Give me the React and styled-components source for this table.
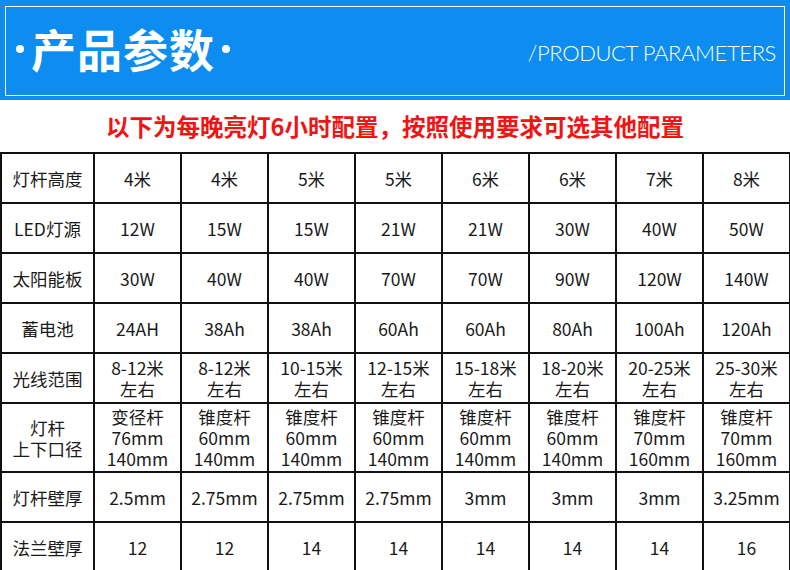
import React from "react";
import styled, { createGlobalStyle } from "styled-components";

const Global = createGlobalStyle`
  body {
    margin: 0;
    background: #fff;
    font-family: "Noto Sans CJK SC", "Noto Sans", sans-serif;
  }
`;

const Root = styled.div`
  width: 790px;
  height: 570px;
  overflow: hidden;
`;

const Banner = styled.div`
  background: #0d8def;
  height: 100px;
  padding: 6px 5px 4px 5px;
  box-sizing: border-box;
`;

const BannerFrame = styled.div`
  height: 100%;
  box-sizing: border-box;
  border: 1px solid #fff;
  display: flex;
  align-items: center;
  justify-content: space-between;
  padding: 0 8px 0 10px;
`;

const Title = styled.h1`
  margin: 0 0 6px 0;
  color: #fff;
  font-size: 45px;
  font-weight: 700;
  letter-spacing: 1px;
  display: flex;
  align-items: center;
  gap: 7px;
`;

const Dot = styled.span`
  display: inline-block;
  width: 8px;
  height: 8px;
  border-radius: 50%;
  background: #fff;
  margin-top: 2px;
`;

const Subtitle = styled.div`
  color: #fff;
  font-family: "Lato", "Liberation Sans", sans-serif;
  font-weight: 300;
  font-size: 22px;
  letter-spacing: -0.4px;
  margin-top: 2px;
`;

const Notice = styled.p`
  margin: 0;
  height: 52px;
  display: flex;
  align-items: center;
  justify-content: center;
  color: #f01414;
  font-size: 23.5px;
  font-weight: 700;
  box-sizing: border-box;
`;

const Table = styled.table`
  width: 790px;
  border-collapse: collapse;
  table-layout: fixed;
  color: #1a1a1a;
  font-size: 17.5px;
`;

const Cell = styled.td`
  border: 2px solid #111;
  height: ${(p) => p.$h}px;
  padding: 0;
  text-align: center;
  vertical-align: middle;
  line-height: 21px;
  white-space: pre-line;
`;

const rows = [
  { h: 48, label: "灯杆高度", values: ["4米", "4米", "5米", "5米", "6米", "6米", "7米", "8米"] },
  { h: 48, label: "LED灯源", values: ["12W", "15W", "15W", "21W", "21W", "30W", "40W", "50W"] },
  { h: 48, label: "太阳能板", values: ["30W", "40W", "40W", "70W", "70W", "90W", "120W", "140W"] },
  { h: 48, label: "蓄电池", values: ["24AH", "38Ah", "38Ah", "60Ah", "60Ah", "80Ah", "100Ah", "120Ah"] },
  {
    h: 48,
    label: "光线范围",
    values: ["8-12米\n左右", "8-12米\n左右", "10-15米\n左右", "12-15米\n左右", "15-18米\n左右", "18-20米\n左右", "20-25米\n左右", "25-30米\n左右"],
  },
  {
    h: 67,
    label: "灯杆\n上下口径",
    values: [
      "变径杆\n76mm\n140mm",
      "锥度杆\n60mm\n140mm",
      "锥度杆\n60mm\n140mm",
      "锥度杆\n60mm\n140mm",
      "锥度杆\n60mm\n140mm",
      "锥度杆\n60mm\n140mm",
      "锥度杆\n70mm\n160mm",
      "锥度杆\n70mm\n160mm",
    ],
  },
  { h: 48, label: "灯杆壁厚", values: ["2.5mm", "2.75mm", "2.75mm", "2.75mm", "3mm", "3mm", "3mm", "3.25mm"] },
  { h: 48, label: "法兰壁厚", values: ["12", "12", "14", "14", "14", "14", "14", "16"] },
];

export default function App() {
  return (
    <Root>
      <Global />
      <Banner>
        <BannerFrame>
          <Title>
            <Dot />
            产品参数
            <Dot />
          </Title>
          <Subtitle>/PRODUCT PARAMETERS</Subtitle>
        </BannerFrame>
      </Banner>
      <Notice>以下为每晚亮灯6小时配置，按照使用要求可选其他配置</Notice>
      <Table>
        <colgroup>
          <col style={{ width: 93 }} />
          {Array.from({ length: 8 }).map((_, i) => (
            <col key={i} style={{ width: 87 }} />
          ))}
        </colgroup>
        <tbody>
          {rows.map((r) => (
            <tr key={r.label}>
              <Cell $h={r.h}>{r.label}</Cell>
              {r.values.map((v, i) => (
                <Cell key={i} $h={r.h}>
                  {v}
                </Cell>
              ))}
            </tr>
          ))}
        </tbody>
      </Table>
    </Root>
  );
}
